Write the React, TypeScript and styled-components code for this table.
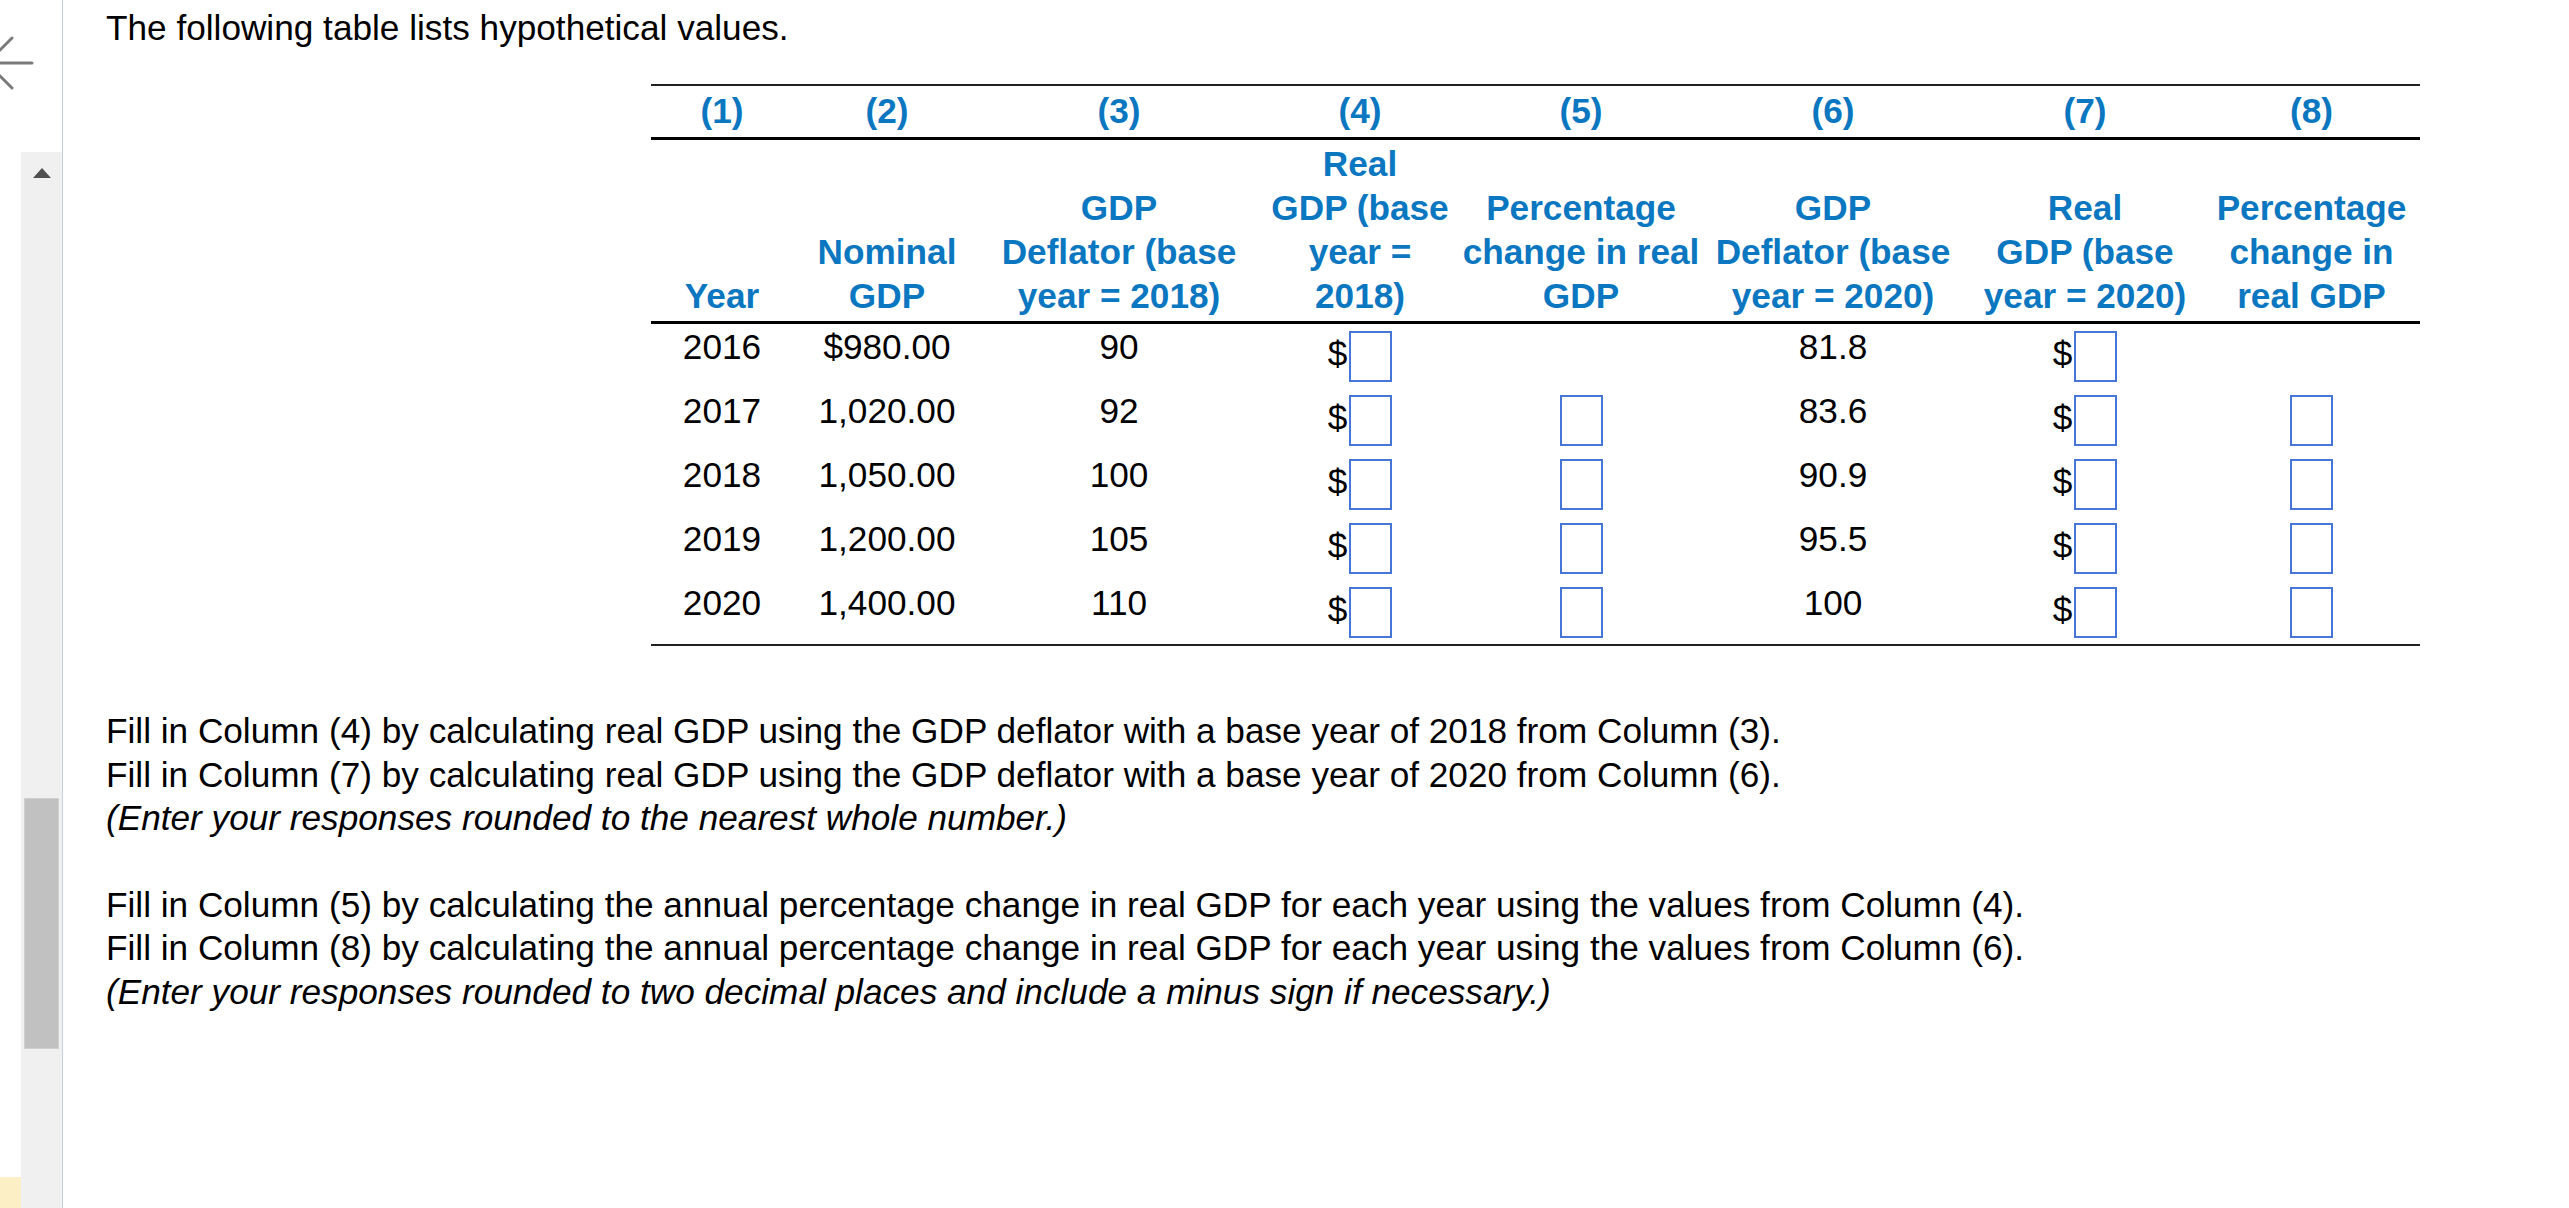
import React from "react";
import styled, { createGlobalStyle } from "styled-components";

const GlobalStyle = createGlobalStyle`
  html, body { margin: 0; padding: 0; background: #fff; overflow: hidden; }
  body { font-family: "Liberation Sans", Arial, sans-serif; }
  * { box-sizing: border-box; }
`;

const Page = styled.div`
  display: flex;
  width: 2569px;
  height: 1208px;
`;

const Sidebar = styled.aside`
  flex: 0 0 63px;
  display: grid;
  grid-template-columns: 21px 41px;
  grid-template-rows: 152px 1fr;
  border-right: 1px solid #c8d0df;
`;

const BackArrow = styled.svg`
  grid-column: 1 / 3;
  grid-row: 1;
  width: 62px;
  height: 152px;
  display: block;
`;

const Strip = styled.div`
  grid-column: 1;
  grid-row: 2;
  display: flex;
  flex-direction: column;
  justify-content: flex-end;
`;

const Tab = styled.div`
  height: 31px;
  background: #fcefc5;
`;

const Track = styled.div`
  grid-column: 2;
  grid-row: 2;
  background: #f0f0f0;
  display: flex;
  flex-direction: column;
  align-items: center;
`;

const UpButton = styled.div`
  width: 100%;
  height: 42px;
  display: flex;
  align-items: center;
  justify-content: center;
`;

const Triangle = styled.div`
  width: 0;
  height: 0;
  border-left: 9.5px solid transparent;
  border-right: 9.5px solid transparent;
  border-bottom: 10px solid #505050;
`;

const Thumb = styled.div`
  margin-top: 604px;
  width: 35px;
  height: 251px;
  background: #c1c1c1;
  border: 1px solid #cfcfcf;
`;

const Main = styled.main`
  flex: 1;
  padding: 6px 0 0 43px;
  color: #000;
  font-size: 35.2px;
  line-height: 44px;
`;

const Intro = styled.p`
  margin: 0;
`;

const Table = styled.div`
  margin: 34px 0 0 545px;
  width: 1769px;
  border-bottom: 2px solid #222;
`;

const Row = styled.div`
  display: grid;
  grid-template-columns: 142px 188px 276px 206px 236px 268px 236px 217px;
`;

const NumberRow = styled(Row)`
  border-top: 2px solid #222;
  border-bottom: 3px solid #000;
  padding: 3px 0 4px;
`;

const HeadRow = styled(Row)`
  border-bottom: 3px solid #000;
  padding: 2px 0 3px;
  height: 184px;
`;

const DataRow = styled(Row)`
  height: 64px;
`;

const HeadCell = styled.div`
  display: flex;
  flex-direction: column;
  justify-content: flex-end;
  align-items: center;
  color: #0a77c0;
  font-weight: bold;
  white-space: nowrap;
  text-align: center;
`;

const DataCell = styled.div`
  display: flex;
  justify-content: center;
  align-items: flex-start;
  padding-top: 1px;
  white-space: nowrap;
`;

const InputGroup = styled.div`
  display: flex;
  align-items: center;
  margin-top: 6px;
`;

const Dollar = styled.span`
  margin: 0 2px 6px 0;
`;

const AnswerBox = styled.input`
  width: 43px;
  height: 51px;
  padding: 0;
  margin: 0;
  border: 2px solid #4676d7;
  border-radius: 0;
  background: #fff;
  outline: none;
  font: inherit;
`;

const Instructions = styled.div`
  margin-top: 63px;
  line-height: 43.5px;
`;

const Para = styled.p`
  margin: 0 0 43px;
`;

const Line = styled.span<{ $italic?: boolean }>`
  display: block;
  font-style: ${(p) => (p.$italic ? "italic" : "normal")};
`;

const headers: string[][] = [
  ["Year"],
  ["Nominal", "GDP"],
  ["GDP", "Deflator (base", "year = 2018)"],
  ["Real", "GDP (base", "year =", "2018)"],
  ["Percentage", "change in real", "GDP"],
  ["GDP", "Deflator (base", "year = 2020)"],
  ["Real", "GDP (base", "year = 2020)"],
  ["Percentage", "change in", "real GDP"],
];

const rows = [
  { year: "2016", nominal: "$980.00", d18: "90", d20: "81.8", pct: false },
  { year: "2017", nominal: "1,020.00", d18: "92", d20: "83.6", pct: true },
  { year: "2018", nominal: "1,050.00", d18: "100", d20: "90.9", pct: true },
  { year: "2019", nominal: "1,200.00", d18: "105", d20: "95.5", pct: true },
  { year: "2020", nominal: "1,400.00", d18: "110", d20: "100", pct: true },
];

const MoneyInput = () => (
  <InputGroup>
    <Dollar>$</Dollar>
    <AnswerBox type="text" aria-label="answer" />
  </InputGroup>
);

const PlainInput = () => (
  <InputGroup>
    <AnswerBox type="text" aria-label="answer" />
  </InputGroup>
);

export default function App() {
  return (
    <>
      <GlobalStyle />
      <Page>
        <Sidebar>
          <BackArrow viewBox="0 0 62 152">
            <g stroke="#7a7a7a" strokeWidth="3" strokeLinecap="round" fill="none">
              <line x1="-13" y1="63" x2="32" y2="63" />
              <line x1="-13" y1="63" x2="12" y2="38" />
              <line x1="-13" y1="63" x2="12" y2="88" />
            </g>
          </BackArrow>
          <Strip>
            <Tab />
          </Strip>
          <Track>
            <UpButton>
              <Triangle />
            </UpButton>
            <Thumb />
          </Track>
        </Sidebar>
        <Main>
          <Intro>The following table lists hypothetical values.</Intro>
          <Table>
            <NumberRow>
              {headers.map((_, i) => (
                <HeadCell key={i}>({i + 1})</HeadCell>
              ))}
            </NumberRow>
            <HeadRow>
              {headers.map((lines, i) => (
                <HeadCell key={i}>
                  {lines.map((l) => (
                    <Line key={l}>{l}</Line>
                  ))}
                </HeadCell>
              ))}
            </HeadRow>
            {rows.map((r) => (
              <DataRow key={r.year}>
                <DataCell>{r.year}</DataCell>
                <DataCell>{r.nominal}</DataCell>
                <DataCell>{r.d18}</DataCell>
                <DataCell>
                  <MoneyInput />
                </DataCell>
                <DataCell>{r.pct && <PlainInput />}</DataCell>
                <DataCell>{r.d20}</DataCell>
                <DataCell>
                  <MoneyInput />
                </DataCell>
                <DataCell>{r.pct && <PlainInput />}</DataCell>
              </DataRow>
            ))}
          </Table>
          <Instructions>
            <Para>
              <Line>Fill in Column (4) by calculating real GDP using the GDP deflator with a base year of 2018 from Column (3).</Line>
              <Line>Fill in Column (7) by calculating real GDP using the GDP deflator with a base year of 2020 from Column (6).</Line>
              <Line $italic>(Enter your responses rounded to the nearest whole number.)</Line>
            </Para>
            <Para>
              <Line>Fill in Column (5) by calculating the annual percentage change in real GDP for each year using the values from Column (4).</Line>
              <Line>Fill in Column (8) by calculating the annual percentage change in real GDP for each year using the values from Column (6).</Line>
              <Line $italic>(Enter your responses rounded to two decimal places and include a minus sign if necessary.)</Line>
            </Para>
          </Instructions>
        </Main>
      </Page>
    </>
  );
}
